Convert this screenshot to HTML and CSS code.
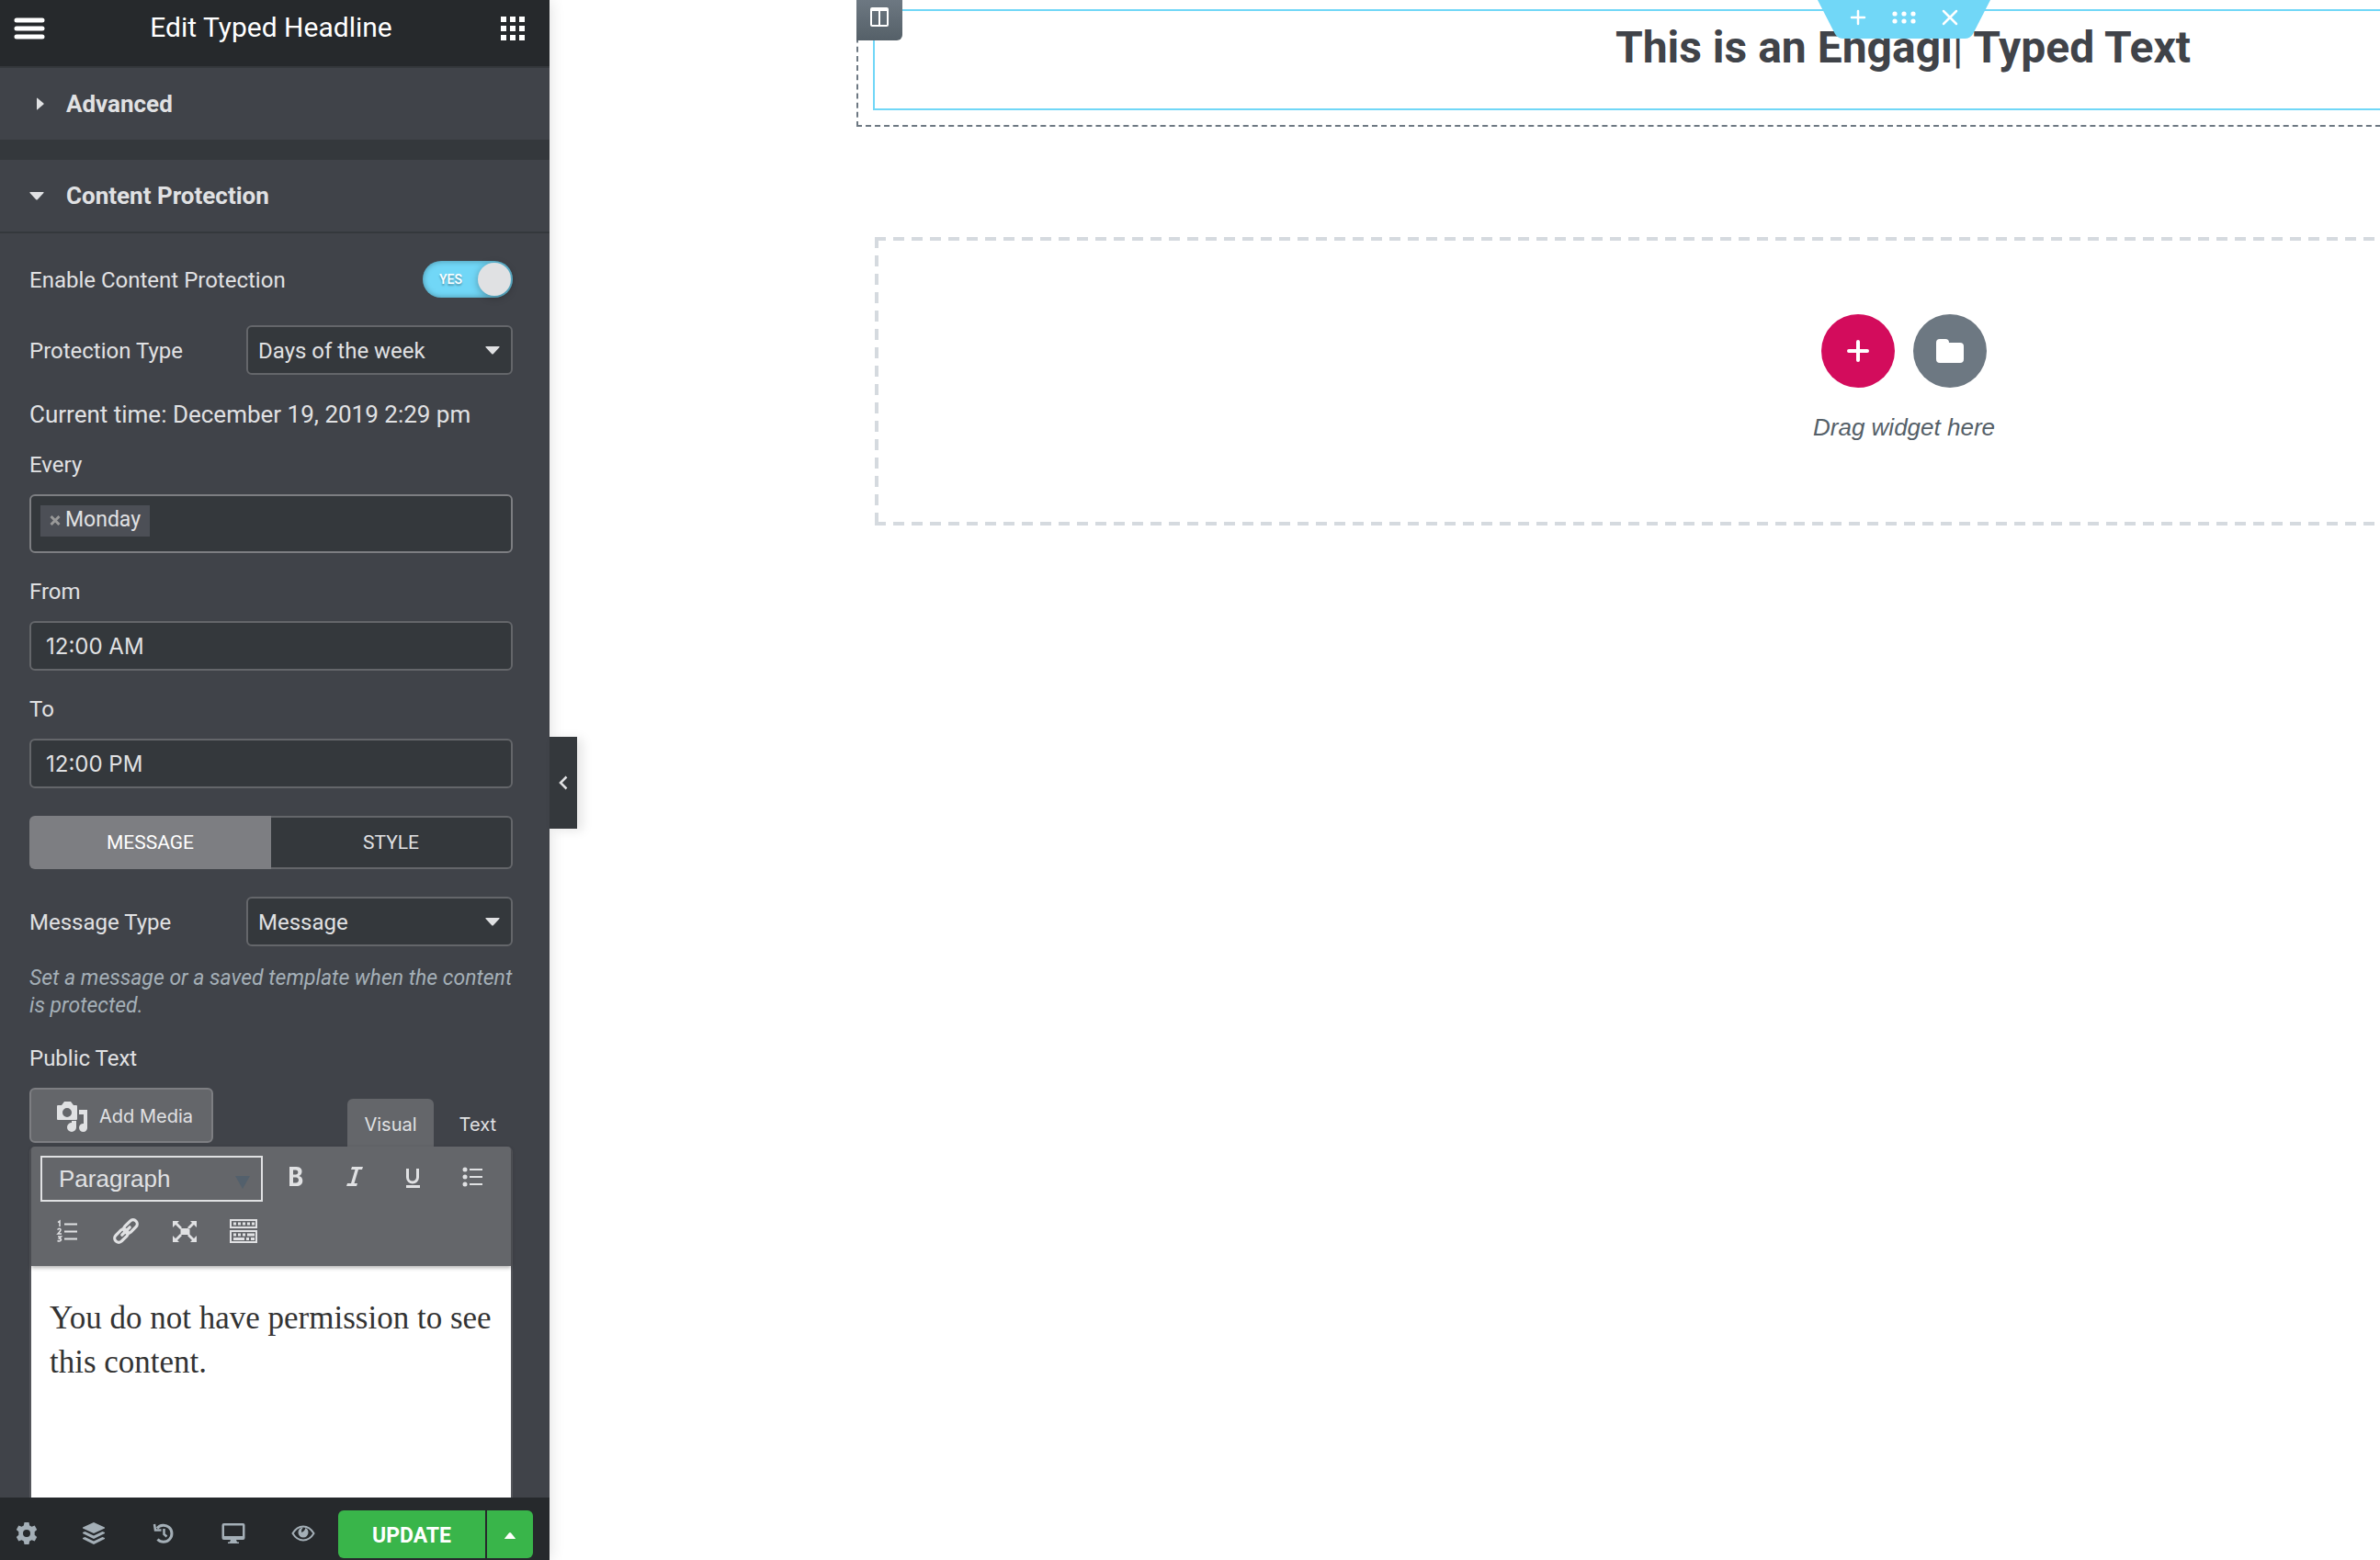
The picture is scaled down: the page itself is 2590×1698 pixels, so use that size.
FILE: index.html
```html
<!DOCTYPE html>
<html lang="en">
<head>
<meta charset="utf-8">
<title>Edit Typed Headline</title>
<link rel="stylesheet" href="styles.css">
</head>
<body>
<div class="editor">
  <aside class="panel">
    <header class="panel-header">
      <button class="icon-button" type="button" aria-label="Menu">
        <svg width="34" height="24" viewBox="0 0 34 24" stroke="#fff" stroke-width="5" stroke-linecap="round"><path d="M3 3h28M3 12h28M3 21h28"/></svg>
      </button>
      <h1 class="panel-title">Edit Typed Headline</h1>
      <button class="icon-button" type="button" aria-label="Widgets">
        <svg width="26" height="26" viewBox="0 0 26 26" fill="#fff"><path d="M0 0h6v6H0zM10 0h6v6h-6zM20 0h6v6h-6zM0 10h6v6H0zM10 10h6v6h-6zM20 10h6v6h-6zM0 20h6v6H0zM10 20h6v6h-6zM20 20h6v6h-6z"/></svg>
      </button>
    </header>

    <div class="panel-body">
      <button class="section-toggle" type="button" aria-expanded="false">
        <span class="toggle-mark"><svg width="8" height="14" viewBox="0 0 8 14" fill="#e0e1e3"><path d="M0 1q0-1 1 0l6.500 5.500q.5.500 0 1L1 13q-1 1-1 0z"/></svg></span>Advanced
      </button>
      <button class="section-toggle section-open" type="button" aria-expanded="true">
        <span class="toggle-mark"><svg width="16" height="9" viewBox="0 0 16 9" fill="#e0e1e3"><path d="M1 0h14q1 0 .5 1L9 8q-1 1-2 0L.5 1Q0 0 1 0z"/></svg></span>Content Protection
      </button>

      <div class="controls">
        <div class="row">
          <label for="enable">Enable Content Protection</label>
          <span class="switch"><input id="enable" type="checkbox" checked><span class="switch-text">YES</span></span>
        </div>
        <div class="row">
          <label for="ptype">Protection Type</label>
          <span class="select-wrap"><select id="ptype" class="field"><option>Days of the week</option></select><svg class="caret" width="16" height="9" viewBox="0 0 16 9" fill="#e0e1e3"><path d="M1 0h14q1 0 .5 1L9 8q-1 1-2 0L.5 1Q0 0 1 0z"/></svg></span>
        </div>
        <p class="note">Current time: December 19, 2019 2:29 pm</p>
        <div class="stack" role="group" aria-labelledby="every">
          <span id="every" class="label">Every</span>
          <div class="field tags">
            <span class="tag"><button class="tag-remove" type="button" aria-label="Remove Monday"><svg width="12" height="13" viewBox="0 0 12 13" stroke="#999" stroke-width="3"><path d="M1.500 2l9 9M10.500 2l-9 9"/></svg></button>Monday</span>
          </div>
        </div>
        <div class="stack">
          <label for="from">From</label>
          <input id="from" class="field time" type="text" value="12:00 AM">
        </div>
        <div class="stack">
          <label for="to">To</label>
          <input id="to" class="field time" type="text" value="12:00 PM">
        </div>
        <div class="tabs">
          <button class="tab tab-active" type="button">MESSAGE</button>
          <button class="tab" type="button">STYLE</button>
        </div>
        <div class="row">
          <label for="mtype">Message Type</label>
          <span class="select-wrap"><select id="mtype" class="field"><option>Message</option></select><svg class="caret" width="16" height="9" viewBox="0 0 16 9" fill="#e0e1e3"><path d="M1 0h14q1 0 .5 1L9 8q-1 1-2 0L.5 1Q0 0 1 0z"/></svg></span>
        </div>
        <p class="description">Set a message or a saved template when the content is protected.</p>
        <div class="stack wysiwyg">
          <label for="public">Public Text</label>
          <div class="wysiwyg-top">
            <button class="add-media" type="button">
              <svg width="33" height="33" viewBox="0 0 33 33" fill="#e0e1e3"><path fill-rule="evenodd" d="M1 4h4l3-4h7l3 4h3q1 0 1 1v14q0 1-1 1H1q-1 0-1-1V5q0-1 1-1zm10 3a5 5 0 1 0 0 10a5 5 0 0 0 0-10z"/><path d="M24 9h9v19a4.500 4.500 0 1 1-4-4V14h-5z"/><path d="M16 21h5v7a5 5 0 1 1-5-5z"/></svg>
              Add Media
            </button>
            <div class="mode-tabs">
              <button class="mode mode-active" type="button">Visual</button>
              <button class="mode" type="button">Text</button>
            </div>
          </div>
          <div class="editor-box">
            <div class="toolbar">
              <span class="format-wrap"><select class="format" aria-label="Format"><option>Paragraph</option></select><svg class="format-caret" width="16" height="14" viewBox="0 0 16 14" fill="#53606c"><path d="M0 0h16L8 14z"/></svg></span>
              <button class="tool" type="button" aria-label="Bold"><svg width="30" height="30" viewBox="0 0 30 30" fill="#e0e1e3"><path fill-rule="evenodd" d="M8 4h7.500c4 0 6 2 6 5.200c0 2.300-1.200 4-3.200 4.700c2.700.6 4 2.600 4 5.200c0 4-2.700 6-6.800 6H8zM12 7.400v5h2.800c3.400 0 3.400-5 0-5zM12 15.600v6h3c4 0 4-6 0-6z"/></svg></button>
              <button class="tool" type="button" aria-label="Italic"><svg width="30" height="30" viewBox="0 0 30 30" fill="#e0e1e3"><path d="M12 4h12l-1 3h-4l-4.500 15h3.500l-1 3H6l1-3h4l4.500-15H11z"/></svg></button>
              <button class="tool" type="button" aria-label="Underline"><svg width="30" height="30" viewBox="0 0 30 30" fill="none" stroke="#e0e1e3" stroke-width="3"><path d="M8.500 6v9.500a5.500 5.500 0 0 0 11 0V6M7 25.500h15"/></svg></button>
              <button class="tool" type="button" aria-label="Bulleted list"><svg width="30" height="30" viewBox="0 0 30 30" fill="#e0e1e3"><circle cx="7" cy="7" r="2.500"/><circle cx="7" cy="15" r="2.500"/><circle cx="7" cy="23" r="2.500"/><path d="M12 6h14v2H12zM12 14h14v2H12zM12 22h14v2H12z"/></svg></button>
              <button class="tool" type="button" aria-label="Numbered list"><svg width="30" height="30" viewBox="0 0 30 30" fill="none" stroke="#e0e1e3" stroke-width="2"><path d="M12 7.500h14M12 15.500h14M12 23.500h14"/><path stroke-width="1.500" d="M5 5.500L7 4v6M4.500 13.500q3-2.500 3.500 0Q8 15 5 18h4M5 21h3.500L6.500 23q2 0 2 1.700q-1 2-4 .8"/></svg></button>
              <button class="tool" type="button" aria-label="Link"><svg width="30" height="30" viewBox="0 0 30 30" fill="none" stroke="#e0e1e3" stroke-width="3.200"><g transform="rotate(-45 15 15)"><rect x="-0.500" y="10.500" width="17" height="9" rx="4.500"/><rect x="13.500" y="10.500" width="17" height="9" rx="4.500"/><path stroke="#64666a" stroke-width="1.500" d="M11.500 12.600v4.800M18.500 12.600v4.800"/><path stroke-linecap="round" d="M9 15h12"/></g></svg></button>
              <button class="tool" type="button" aria-label="Fullscreen"><svg width="30" height="30" viewBox="0 0 30 30" fill="#e0e1e3"><path d="M10.500 12h10v7h-10zM2 4h7L7 6l5 5-2 2-5-5-3 3zM28 4h-7l2 2-5 5 2 2 5-5 3 3zM2 27h7l-2-2 5-5-2-2-5 5-3-3zM28 27h-7l2-2-5-5 2-2 5 5 3-3z"/></svg></button>
              <button class="tool" type="button" aria-label="Toolbar toggle"><svg width="30" height="30" viewBox="0 0 30 30" fill="none" stroke="#e0e1e3" stroke-width="2"><path d="M1 3h28v8H1zM1 15h28v12H1z"/><path stroke-width="3" stroke-dasharray="3 2" d="M4 7h23M4 19h13"/><path stroke-width="3" d="M19 19h8M4 23.500h12M18 23.500h3M23 23.500h4"/></svg></button>
            </div>
            <textarea id="public" class="content">You do not have permission to see this content.</textarea>
          </div>
        </div>
      </div>
    </div>

    <footer class="panel-footer">
      <button class="foot" type="button" aria-label="Settings"><svg width="24" height="26" viewBox="0 0 24 26" fill="#a4afb7"><path fill-rule="evenodd" d="M9.500 1h5l.7 3.400l2.300 1.300l3.200-1.100l2.500 4.300l-2.500 2.300v3.600l2.500 2.300l-2.500 4.300l-3.200-1.100l-2.300 1.300l-.7 3.400h-5l-.7-3.400l-2.300-1.300l-3.200 1.100L.8 17.100l2.500-2.300v-3.600L.8 8.900l2.500-4.300l3.200 1.100l2.300-1.300zM12 9a4 4 0 1 0 0 8a4 4 0 0 0 0-8z"/></svg></button>
      <button class="foot" type="button" aria-label="Navigator"><svg width="26" height="26" viewBox="0 0 26 26" fill="#a4afb7"><path d="M13 1l12 5.500v1L13 13L1 7.500v-1zM1 12l2.500-1L13 15.500L22.500 11l2.500 1v1L13 19L1 13zM1 18l2.500-1L13 21.500l9.500-4.500l2.500 1v1L13 25L1 19z"/></svg></button>
      <button class="foot" type="button" aria-label="History"><svg width="24" height="26" viewBox="0 0 24 26" fill="none" stroke="#a4afb7" stroke-width="3"><path d="M5 7.500A9 9 0 1 1 5.500 19.500"/><path d="M2 3l1 6.500h6.500" stroke-width="2.500"/><path d="M12.500 8v6l3 2.500" stroke-width="2.500"/></svg></button>
      <button class="foot" type="button" aria-label="Responsive mode"><svg width="26" height="26" viewBox="0 0 26 26" fill="#a4afb7"><path fill-rule="evenodd" d="M2.500 2h21q2 0 2 2v14q0 2-2 2H16l1 2.500h2V24H7v-1.500h2L10 20H2.500q-2 0-2-2V4q0-2 2-2zM3 4.500v11.500h20V4.500z"/></svg></button>
      <button class="foot" type="button" aria-label="Preview"><svg width="26" height="26" viewBox="0 0 26 26" fill="none" stroke="#a4afb7" stroke-width="2"><path d="M1.500 13Q6 5.500 13 5.500T24.500 13Q20 20.500 13 20.500T1.500 13z"/><path d="M13 6.500a5.500 5.500 0 1 0 5.500 5.500a5.500 5.500 0 0 0-3-5q-1 4-4.500 5q0-4 2-5.500z" fill="#a4afb7" stroke="none"/></svg></button>
      <div class="publish">
        <button class="update" type="button">UPDATE</button>
        <button class="update-more" type="button" aria-label="Save options"><svg width="12" height="7" viewBox="0 0 12 7" fill="#fff"><path d="M.5 7q-.8 0 0-1L5 .6q1-1 2 0L11.500 6q.8 1 0 1z"/></svg></button>
      </div>
    </footer>

    <button class="collapse" type="button" aria-label="Hide panel"><svg width="10" height="16" viewBox="0 0 10 16" fill="none" stroke="#e0e1e3" stroke-width="2.500"><path d="M8.500 1.500L2 8l6.500 6.500"/></svg></button>
  </aside>

  <main class="canvas">
    <section class="section">
      <div class="widget">
        <h2 class="headline">This is an Engagi<span class="cursor">|</span> Typed Text</h2>
      </div>
      <button class="column-handle" type="button" aria-label="Edit column"><svg width="20" height="21" viewBox="0 0 20 21" fill="none" stroke="#fff" stroke-width="2"><rect x="1" y="1" width="18" height="19" rx="1"/><path d="M10 3v17M1 3h18"/></svg></button>
      <div class="section-handle">
        <svg class="handle-shape" width="188" height="42" viewBox="0 0 188 42"><path fill="#71d7f7" d="M0 0h188l-19 37q-3 5-9 5H28q-6 0-9-5z"/></svg>
        <button class="handle-button" type="button" aria-label="Add section"><svg width="18" height="18" viewBox="0 0 18 18" stroke="#fff" stroke-width="2.500" stroke-linecap="round"><path d="M9 2v14M2 9h14"/></svg></button>
        <button class="handle-button" type="button" aria-label="Edit section"><svg width="28" height="16" viewBox="0 0 28 16" fill="#fff"><circle cx="4" cy="4" r="2.600"/><circle cx="14" cy="4" r="2.600"/><circle cx="24" cy="4" r="2.600"/><circle cx="4" cy="12" r="2.600"/><circle cx="14" cy="12" r="2.600"/><circle cx="24" cy="12" r="2.600"/></svg></button>
        <button class="handle-button" type="button" aria-label="Delete section"><svg width="18" height="18" viewBox="0 0 18 18" stroke="#fff" stroke-width="2.500" stroke-linecap="round"><path d="M2 2l14 14M16 2L2 16"/></svg></button>
      </div>
    </section>

    <section class="drop-area">
      <div class="drop-buttons">
        <button class="round round-add" type="button" aria-label="Add new section"><svg width="24" height="24" viewBox="0 0 24 24" stroke="#fff" stroke-width="4" stroke-linecap="round"><path d="M12 2v20M2 12h20"/></svg></button>
        <button class="round round-folder" type="button" aria-label="Add template"><svg width="30" height="26" viewBox="0 0 30 26" fill="#fff"><path d="M4 0h6q4 0 4 4h12q4 0 4 4v14q0 4-4 4H4q-4 0-4-4V4q0-4 4-4z"/></svg></button>
      </div>
      <p class="drop-text">Drag widget here</p>
    </section>
  </main>
</div>
</body>
</html>
```
FILE: styles.css
```css
* {
  box-sizing: border-box;
}

body {
  margin: 0;
  background: #fff;
  color: #e0e1e3;
  font-family: Roboto, "Liberation Sans", sans-serif;
  font-size: 24px;
  line-height: 28px;
}

button,
input,
select,
textarea {
  margin: 0;
  padding: 0;
  border: 0;
  background: none;
  color: inherit;
  font: inherit;
  appearance: none;
}

h1,
h2,
p {
  margin: 0;
}

svg {
  display: block;
}

.editor {
  display: grid;
  grid-template-columns: 598px minmax(0, 1fr);
  height: 100vh;
  overflow: hidden;
}

/* Side panel */
.panel {
  position: relative;
  z-index: 2;
  display: flex;
  flex-direction: column;
  min-height: 0;
  background: #404349;
  box-shadow: 0 0 16px rgba(0, 0, 0, 0.14);
}

.panel-header {
  flex: none;
  display: flex;
  align-items: center;
  justify-content: space-between;
  height: 72px;
  padding: 0 27px 10px 15px;
  background: #26292c;
  color: #fff;
}

.panel-title {
  padding: 0 4px 2px 0;
  font-size: 30px;
  font-weight: 400;
  line-height: 36px;
}

.panel-body {
  flex: 1;
  display: flex;
  flex-direction: column;
  min-height: 0;
  overflow: hidden;
  border-top: 2px solid #34383c;
}

.section-toggle {
  flex: none;
  display: flex;
  align-items: center;
  height: 78px;
  text-align: left;
  font-size: 26px;
  font-weight: 700;
}

.section-open {
  height: 102px;
  border-top: 22px solid #34383c;
  border-bottom: 2px solid #34383c;
}

.toggle-mark {
  display: flex;
  justify-content: flex-end;
  width: 72px;
  padding-right: 24px;
}

.controls {
  flex: 1;
  display: flex;
  flex-direction: column;
  min-height: 0;
  padding: 30px 40px 0 32px;
}

.row {
  flex: none;
  display: flex;
  align-items: center;
  justify-content: space-between;
  margin-bottom: 30px;
}

.row label {
  padding-top: 1px;
}

.stack {
  display: flex;
  flex-direction: column;
  gap: 18px;
  margin-bottom: 28px;
}

.note {
  margin-bottom: 26px;
  font-size: 26px;
  line-height: 30px;
}

.row + .note {
  margin-top: -2px;
}

.field {
  width: 100%;
  height: 54px;
  padding: 1px 10px 0 11px;
  border: 2px solid #64666a;
  border-radius: 6px;
  background: #34383c;
}

.select-wrap {
  position: relative;
  width: 290px;
}

.caret {
  position: absolute;
  top: 23px;
  right: 14px;
  pointer-events: none;
}

.time {
  padding: 0 16px;
  font-family: Inter, "Liberation Sans", sans-serif;
}

.switch {
  position: relative;
  display: flex;
  align-items: center;
  height: 40px;
}

.switch input {
  width: 98px;
  height: 40px;
  padding: 2px;
  border-radius: 20px;
  background: #71d7f7;
  box-shadow: inset 0 0 6px rgba(0, 0, 0, 0.35);
}

.switch input::before {
  content: "";
  display: block;
  width: 36px;
  height: 36px;
  margin-left: auto;
  border-radius: 18px;
  background: #e0e1e3;
  box-shadow: 0 2px 8px rgba(0, 0, 0, 0.3);
}

.switch-text {
  position: absolute;
  left: 18px;
  color: #fff;
  font-size: 14px;
  font-weight: 500;
  text-shadow: 0 2px 2px rgba(0, 0, 0, 0.3);
  pointer-events: none;
}

.tags {
  height: 64px;
  padding: 10px;
  border-color: #7d7e82;
}

.tag {
  display: flex;
  align-items: center;
  gap: 5px;
  width: max-content;
  height: 34px;
  padding: 0 10px 2px;
  background: #4c4f56;
  font-size: 23px;
}

.tabs {
  flex: none;
  display: grid;
  grid-template-columns: 1fr 1fr;
  height: 58px;
  margin: 2px 0 30px;
}

.tab {
  border: 2px solid #64666a;
  border-left: 0;
  border-radius: 0 6px 6px 0;
  background: #34383c;
  font-size: 21px;
}

.tab-active {
  border: 0;
  border-radius: 6px 0 0 6px;
  background: #7d7e82;
  color: #fff;
}

.description {
  margin: -10px 0 28px;
  color: #a4afb7;
  font-size: 23px;
  font-style: italic;
  line-height: 30px;
}

/* Rich text control */
.wysiwyg {
  flex: 1;
  min-height: 0;
  margin-bottom: 0;
}

.wysiwyg-top {
  display: flex;
  justify-content: space-between;
  height: 46px;
  font-family: Inter, "Liberation Sans", sans-serif;
  font-size: 20px;
}

.add-media {
  display: flex;
  align-items: center;
  gap: 13px;
  height: 60px;
  padding: 2px 20px 0 28px;
  border: 2px solid #7d7e82;
  border-radius: 6px;
  background: #64666a;
}

.mode-tabs {
  display: flex;
  height: 52px;
  margin-top: 12px;
}

.mode {
  padding: 3px 18px 0;
  border-radius: 6px 6px 0 0;
}

.mode + .mode {
  padding: 3px 18px 0 28px;
}

.mode-active {
  background: #64666a;
}

.editor-box {
  flex: 1;
  display: flex;
  flex-direction: column;
  min-height: 0;
  border: 2px solid #54565b;
  border-width: 0 2px;
  border-radius: 6px 6px 0 0;
}

.toolbar {
  position: relative;
  flex: none;
  display: flex;
  flex-wrap: wrap;
  align-content: flex-start;
  gap: 5px 0;
  height: 130px;
  padding: 8px 7px;
  border-radius: 4px 4px 0 0;
  background: #64666a;
  box-shadow: 0 2px 4px rgba(0, 0, 0, 0.3);
}

.format-wrap {
  position: relative;
  width: 242px;
  height: 54px;
  margin: 0 4px 0 3px;
}

.format {
  width: 242px;
  height: 50px;
  margin-top: 2px;
  padding: 0 18px;
  border: 2px solid #e0e1e3;
  font-family: "Liberation Sans", Arial, sans-serif;
  font-size: 26px;
}

.format-caret {
  position: absolute;
  top: 24px;
  right: 14px;
  pointer-events: none;
}

.tool {
  display: grid;
  place-items: center;
  width: 64px;
  height: 50px;
}

.content {
  flex: 1;
  width: 100%;
  min-height: 0;
  padding: 33px 16px 0 20px;
  overflow: hidden;
  resize: none;
  background: #fff;
  color: #333;
  font-family: "Liberation Serif", Georgia, serif;
  font-size: 35px;
  line-height: 48px;
}

/* Panel footer */
.panel-footer {
  flex: none;
  display: flex;
  align-items: flex-start;
  height: 68px;
  padding-right: 18px;
  background: #26292c;
}

.foot {
  display: grid;
  place-items: center;
  width: 76px;
  padding-top: 26px;
}

.foot:first-child {
  width: 64px;
  padding-right: 6px;
}

.publish {
  display: flex;
  gap: 2px;
  height: 52px;
  margin: 14px 0 0 auto;
}

.update {
  width: 160px;
  padding-top: 4px;
  border-radius: 6px 0 0 6px;
  background: #39b54a;
  color: #fff;
  font-size: 23px;
  font-weight: 700;
}

.update-more {
  display: grid;
  place-items: center;
  width: 50px;
  padding-top: 3px;
  border-radius: 0 6px 6px 0;
  background: #39b54a;
}

.collapse {
  position: absolute;
  top: 802px;
  left: 100%;
  display: grid;
  place-items: center;
  width: 30px;
  height: 100px;
  background: #34383c;
  box-shadow: 6px 2px 12px rgba(0, 0, 0, 0.1);
}

/* Page preview */
.canvas {
  min-width: 0;
  overflow: hidden;
}

.section {
  position: relative;
  width: 2280px;
  height: 138px;
  margin-left: 334px;
  padding: 10px 18px;
  border: 2px dashed #6d7882;
  border-top: 0;
}

.widget {
  height: 110px;
  margin-left: -2px;
  border: 2px solid #71d7f7;
}

.headline {
  padding-top: 14px;
  color: #404349;
  font-size: 48px;
  font-weight: 700;
  line-height: 52px;
  text-align: center;
}

.cursor {
  font-weight: 400;
}

.column-handle {
  position: absolute;
  top: 0;
  left: -2px;
  display: grid;
  place-items: center;
  width: 50px;
  height: 44px;
  padding-bottom: 7px;
  border-radius: 0 0 6px 0;
  background: linear-gradient(#6d7882, #556068);
}

.section-handle {
  position: absolute;
  top: 0;
  left: 50%;
  display: flex;
  justify-content: center;
  width: 188px;
  height: 42px;
  margin-left: -94px;
}

.handle-shape {
  position: absolute;
  top: 0;
  left: 0;
}

.handle-button {
  position: relative;
  display: grid;
  place-items: center;
  width: 50px;
  height: 37px;
}

.drop-area {
  --dash: #d5dadf;
  display: flex;
  flex-direction: column;
  align-items: center;
  gap: 28px;
  width: 2240px;
  height: 314px;
  margin: 120px 0 0 354px;
  padding-top: 84px;
  background:
    repeating-linear-gradient(90deg, var(--dash) 0 12px, transparent 12px 20px) top / 100% 4px no-repeat,
    repeating-linear-gradient(90deg, var(--dash) 0 12px, transparent 12px 20px) bottom / 100% 4px no-repeat,
    repeating-linear-gradient(var(--dash) 0 12px, transparent 12px 20px) left / 4px 100% no-repeat,
    repeating-linear-gradient(var(--dash) 0 12px, transparent 12px 20px) right / 4px 100% no-repeat;
}

.drop-buttons {
  display: flex;
  gap: 20px;
}

.round {
  display: grid;
  place-items: center;
  width: 80px;
  height: 80px;
  border-radius: 40px;
}

.round-add {
  background: #d30c5c;
}

.round-folder {
  background: #6d7882;
}

.drop-text {
  color: #556068;
  font-family: "Liberation Sans", Arial, sans-serif;
  font-size: 26px;
  font-style: italic;
  line-height: 30px;
}
```
